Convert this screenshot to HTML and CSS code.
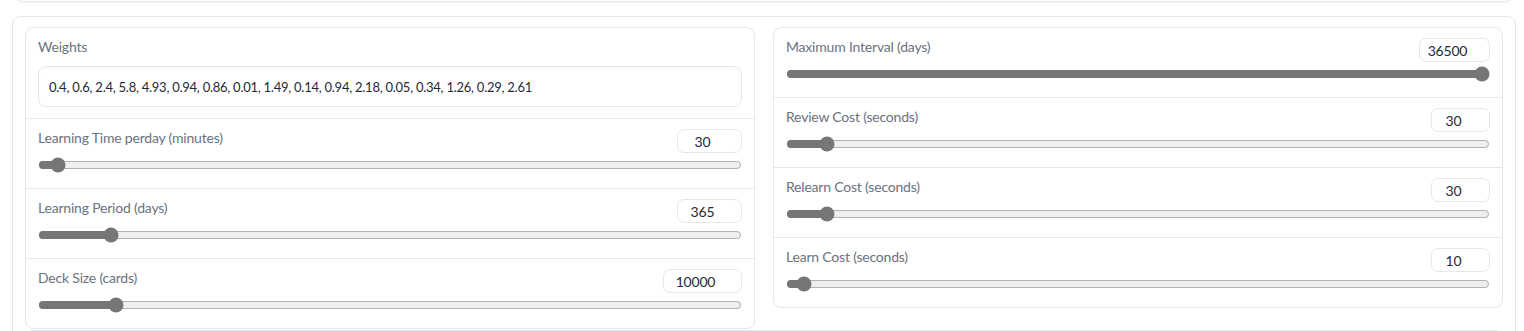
FILE: index.html
```html
<!DOCTYPE html>
<html lang="en">
<head>
  <meta charset="UTF-8">
  <meta name="viewport" content="width=device-width, initial-scale=1.0">
  <title>Simulator settings</title>
  <link rel="stylesheet" href="styles.css">
</head>
<body>
<div class="prev-block"></div>

<div class="panel">
  <div class="settings-row">
    <div class="card">
      <div class="field weights">
        <label class="field-label" for="weights">Weights</label>
        <input type="text" id="weights" class="text-input" value="0.4, 0.6, 2.4, 5.8, 4.93, 0.94, 0.86, 0.01, 1.49, 0.14, 0.94, 2.18, 0.05, 0.34, 1.26, 0.29, 2.61">
      </div>
      <div class="field">
        <div class="field-head">
          <label class="field-label" for="learnTime">Learning Time perday (minutes)</label>
          <input type="number" class="num-input num-md" value="30">
        </div>
        <input type="range" id="learnTime" class="slider" min="1" max="1600" value="30">
      </div>
      <div class="field">
        <div class="field-head">
          <label class="field-label" for="learnPeriod">Learning Period (days)</label>
          <input type="number" class="num-input num-md" value="365">
        </div>
        <input type="range" id="learnPeriod" class="slider" min="1" max="3850" value="365">
      </div>
      <div class="field">
        <div class="field-head">
          <label class="field-label" for="deckSize">Deck Size (cards)</label>
          <input type="number" class="num-input num-lg" value="10000">
        </div>
        <input type="range" id="deckSize" class="slider" min="100" max="97000" value="10000">
      </div>
    </div>

    <div class="card">
      <div class="field">
        <div class="field-head">
          <label class="field-label" for="maxIvl">Maximum Interval (days)</label>
          <input type="number" class="num-input num-wide" value="36500">
        </div>
        <input type="range" id="maxIvl" class="slider" min="365" max="36500" value="36500">
      </div>
      <div class="field">
        <div class="field-head">
          <label class="field-label" for="reviewCost">Review Cost (seconds)</label>
          <input type="number" class="num-input num-sm" value="30">
        </div>
        <input type="range" id="reviewCost" class="slider" min="1" max="600" value="30">
      </div>
      <div class="field">
        <div class="field-head">
          <label class="field-label" for="relearnCost">Relearn Cost (seconds)</label>
          <input type="number" class="num-input num-sm" value="30">
        </div>
        <input type="range" id="relearnCost" class="slider" min="1" max="600" value="30">
      </div>
      <div class="field">
        <div class="field-head">
          <label class="field-label" for="learnCost">Learn Cost (seconds)</label>
          <input type="number" class="num-input num-sm" value="10">
        </div>
        <input type="range" id="learnCost" class="slider" min="1" max="600" value="10">
      </div>
    </div>
  </div>
  <div class="next-block"></div>
</div>
</body>
</html>
```

FILE: styles.css
```css
body {
  margin: 0;
  font-family: "Lato", "Open Sans", sans-serif;
  background: #fff;
  overflow: hidden;
}
.prev-block {
  height: 1px;
  margin: -8px 11px 14px 15px;
  padding-top: 8px;
  border: 1px solid #e5e7eb;
  border-top: none;
  border-radius: 0 0 8px 8px;
  box-shadow: 0 1px 2px rgba(0, 0, 0, 0.04);
}
.panel {
  margin: 0 8px 0 12px;
  padding: 10px 12px;
  border: 1px solid #e5e7eb;
  border-radius: 8px;
  height: 400px;
}
.settings-row {
  display: flex;
  gap: 18px;
  align-items: flex-start;
}
.card {
  flex: 1;
  border: 1px solid #e5e7eb;
  border-radius: 8px;
  overflow: hidden;
  background: #fff;
}
.field {
  height: 70px;
  padding: 10px 12px 0;
  box-sizing: border-box;
  border-top: 1px solid #e5e7eb;
}
.field:first-child {
  border-top: none;
  height: 69px;
}
.field.weights {
  height: 90px;
}
.field-head {
  display: flex;
  justify-content: space-between;
  align-items: flex-start;
  height: 24px;
}
.field-label {
  display: block;
  font-size: 14px;
  line-height: 18px;
  letter-spacing: -0.2px;
  color: #6b7280;
}
.weights .field-label {
  margin-bottom: 10px;
}
.text-input {
  display: block;
  width: 100%;
  height: 41px;
  box-sizing: border-box;
  padding: 0 10px;
  border: 1px solid #e5e7eb;
  border-radius: 8px;
  font-family: inherit;
  font-size: 13px;
  letter-spacing: -0.25px;
  color: #1f2937;
  box-shadow: inset 0 1px 2px rgba(0, 0, 0, 0.03);
  outline: none;
}
.num-input {
  height: 24px;
  box-sizing: border-box;
  padding: 0 14px 0 0;
  border: 1px solid #e5e7eb;
  border-radius: 7px;
  font-family: inherit;
  font-size: 14px;
  letter-spacing: -0.2px;
  color: #1f2937;
  text-align: center;
  outline: none;
  -moz-appearance: textfield;
}
.num-input::-webkit-outer-spin-button,
.num-input::-webkit-inner-spin-button {
  -webkit-appearance: none;
  margin: 0;
}
.num-sm { width: 59px; }
.num-md { width: 65px; }
.num-wide { width: 71px; }
.num-lg { width: 79px; }
.slider {
  display: block;
  width: 100%;
  margin: 4px 0 0;
  height: 16px;
  accent-color: #767676;
}
.next-block {
  margin-top: 1px;
  height: 40px;
  border: 1px solid #e5e7eb;
  border-radius: 8px;
}
```
